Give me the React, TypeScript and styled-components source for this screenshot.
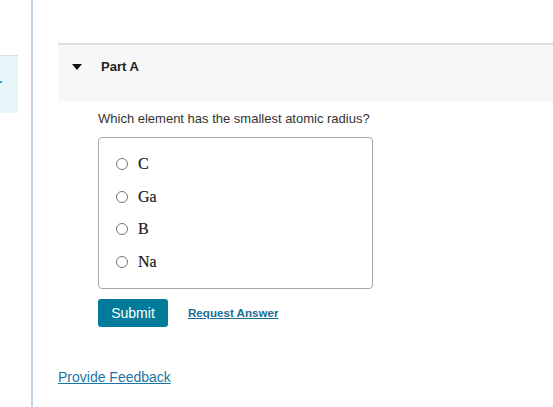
import React from 'react';
import styled, { createGlobalStyle } from 'styled-components';

const GlobalStyle = createGlobalStyle`
  html, body {
    margin: 0;
    padding: 0;
    background: #fff;
    font-family: "Liberation Sans", Arial, sans-serif;
    color: #333;
  }
`;

const Page = styled.div`
  display: flex;
  width: 553px;
  height: 407px;
  overflow: hidden;
`;

const Sidebar = styled.div`
  width: 31px;
  flex-shrink: 0;
  border-right: 2px solid #c4d3e2;
  padding-top: 55px;
`;

const SideTab = styled.div`
  position: relative;
  width: 18px;
  height: 57px;
  background: #e6f6f8;
  border-top: 1px solid #dcdcdc;
`;

const SideMark = styled.span`
  position: absolute;
  left: 0;
  top: 25px;
  width: 2px;
  height: 2px;
  background: #3a9ad9;
`;

const Main = styled.div`
  flex: 1;
  padding: 43px 0 0 25px;
`;

const PartHeader = styled.div`
  display: flex;
  align-items: center;
  height: 42px;
  background: #f7f7f7;
  border-top: 2px solid #dedede;
  padding: 0 0 14px 14px;
  gap: 19px;
`;

const Caret = styled.span`
  width: 0;
  height: 0;
  border-left: 5px solid transparent;
  border-right: 5px solid transparent;
  border-top: 6px solid #111;
  margin-top: 1px;
`;

const PartTitle = styled.span`
  font-size: 13px;
  font-weight: bold;
  color: #222;
`;

const Body = styled.div`
  padding: 10px 0 0 40px;
`;

const Question = styled.p`
  margin: 0 0 11px;
  font-size: 13px;
  color: #333;
`;

const Choices = styled.div`
  width: 275px;
  height: 152px;
  border: 1px solid #a9a9a9;
  border-radius: 4px;
  box-sizing: border-box;
  padding: 15px 0 0 17px;
  display: flex;
  flex-direction: column;
  gap: 10.5px;
`;

const Choice = styled.label`
  display: flex;
  align-items: center;
  height: 22px;
  gap: 10px;
  cursor: pointer;
`;

const Radio = styled.span`
  width: 10px;
  height: 10px;
  border: 1px solid #777;
  border-radius: 50%;
  background: #fff;
`;

const ChoiceText = styled.span`
  font-family: "Liberation Serif", "DejaVu Serif", serif;
  font-size: 16px;
  color: #1a1a1a;
  -webkit-text-stroke: 0.2px #1a1a1a;
`;

const Actions = styled.div`
  display: flex;
  align-items: center;
  gap: 20px;
  margin-top: 10px;
`;

const SubmitButton = styled.button`
  width: 70px;
  height: 28px;
  background: #007b9a;
  color: #fff;
  border: none;
  border-radius: 3px;
  font-family: "Liberation Sans", Arial, sans-serif;
  font-size: 14px;
  cursor: pointer;
  padding: 0;
`;

const RequestLink = styled.a`
  font-size: 11.6px;
  font-weight: bold;
  color: #1a6f92;
  text-decoration: underline;
  margin-top: -1px;
  cursor: pointer;
`;

const Feedback = styled.a`
  display: inline-block;
  margin-top: 42px;
  font-size: 14px;
  color: #1a77a3;
  text-decoration: underline;
  cursor: pointer;
`;

const options = ['C', 'Ga', 'B', 'Na'];

export default function App() {
  return (
    <>
      <GlobalStyle />
      <Page>
        <Sidebar>
          <SideTab>
            <SideMark />
          </SideTab>
        </Sidebar>
        <Main>
          <PartHeader>
            <Caret />
            <PartTitle>Part A</PartTitle>
          </PartHeader>
          <Body>
            <Question>Which element has the smallest atomic radius?</Question>
            <Choices>
              {options.map((o) => (
                <Choice key={o}>
                  <Radio />
                  <ChoiceText>{o}</ChoiceText>
                </Choice>
              ))}
            </Choices>
            <Actions>
              <SubmitButton>Submit</SubmitButton>
              <RequestLink>Request Answer</RequestLink>
            </Actions>
          </Body>
          <Feedback>Provide Feedback</Feedback>
        </Main>
      </Page>
    </>
  );
}
